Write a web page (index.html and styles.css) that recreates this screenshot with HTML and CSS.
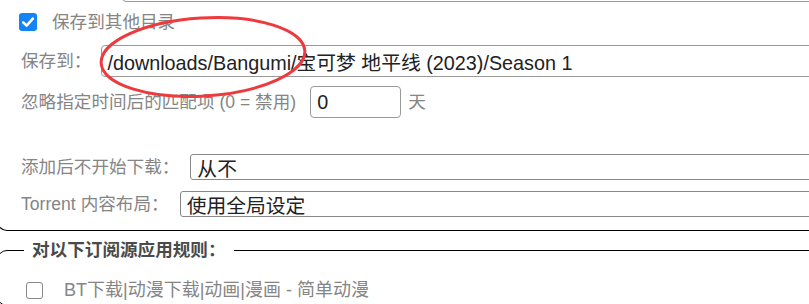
FILE: index.html
```html
<!DOCTYPE html>
<html lang="zh-CN">
<head>
<meta charset="utf-8">
<title>RSS 规则</title>
<link rel="stylesheet" href="styles.css">
</head>
<body>
<div class="page">
  <div class="group">
    <div class="prev-input"></div>
    <label class="row row-check">
      <span class="check checked"><svg viewBox="0 0 18 18" width="18" height="18"><path d="M4.2 9.4 L7.6 12.6 L13.8 5.6" fill="none" stroke="#fff" stroke-width="2.6" stroke-linecap="round" stroke-linejoin="round"/></svg></span>
      <span class="label">保存到其他目录</span>
    </label>
    <div class="row row-save">
      <span class="label">保存到：</span>
      <div class="field wide">/downloads/Bangumi/宝可梦 地平线 (2023)/Season 1</div>
    </div>
    <div class="row row-ignore">
      <span class="label">忽略指定时间后的匹配项 (0 = 禁用)</span>
      <div class="field num">0</div>
      <span class="label unit">天</span>
    </div>
    <div class="row row-paused">
      <span class="label">添加后不开始下载：</span>
      <div class="field select">从不</div>
    </div>
    <div class="row row-layout">
      <span class="label">Torrent 内容布局：</span>
      <div class="field select">使用全局设定</div>
    </div>
  </div>
  <fieldset class="feeds">
    <legend>对以下订阅源应用规则：</legend>
    <label class="row feed-item">
      <span class="check"></span>
      <span class="label feed-label">BT下载|动漫下载|动画|漫画 - 简单动漫</span>
    </label>
  </fieldset>
  <svg class="annotation" width="809" height="304" viewBox="0 0 809 304">
    <ellipse cx="203" cy="57" rx="102" ry="39" transform="rotate(-3.5 203 57)" fill="none" stroke="#ee3a3d" stroke-width="3"/>
  </svg>
</div>
</body>
</html>
```
FILE: styles.css
```css
html, body {
  margin: 0;
  padding: 0;
  background: #fff;
}
body {
  width: 809px;
  height: 304px;
  overflow: hidden;
  font-family: "Liberation Sans", "Noto Sans CJK SC", sans-serif;
}
.page {
  position: relative;
  width: 809px;
  height: 304px;
  overflow: hidden;
}
.group {
  border: 1px solid #000;
  border-top: 0;
  border-radius: 0 0 10px 10px;
  margin: 0 -20px 0 -3px;
  padding: 0 0 13px 23px;
}
.prev-input {
  height: 30px;
  margin: -28px 0 0 101px;
  border: 1px solid #999;
  border-radius: 4px;
  box-sizing: border-box;
}
.row {
  display: flex;
  align-items: center;
}
.label {
  font-size: 17.6px;
  line-height: 22px;
  color: #858585;
  white-space: nowrap;
}
.row-check {
  height: 40px;
}
.check {
  width: 18px;
  height: 18px;
  box-sizing: border-box;
  border-radius: 3px;
  flex: none;
  display: flex;
}
.check.checked {
  background: #1384f7;
  margin-left: -2px;
  margin-right: 15px;
}
.field {
  box-sizing: border-box;
  border: 1px solid #999;
  border-radius: 4px;
  color: #222;
  font-size: 19.8px;
  display: flex;
  align-items: center;
  white-space: nowrap;
}
.wide {
  flex: 1;
  height: 32px;
  margin-left: 10px;
  padding-left: 5px;
}
.row-save {
  margin-top: 3px;
}
.row-ignore {
  margin-top: 9px;
}
.num {
  width: 91px;
  height: 32px;
  margin-left: 14px;
  padding-left: 6px;
}
.unit {
  margin-left: 7px;
}
.select {
  flex: 1;
  height: 26px;
  margin-left: 11px;
  padding-left: 6px;
  border-color: #888;
  border-radius: 3px;
}
.row-paused {
  margin-top: 36px;
}
.row-layout {
  margin-top: 11px;
}
.feeds {
  margin: 7px -20px 0 -3px;
  padding: 0 0 0 26px;
  border: 1px solid #000;
  border-radius: 10px;
  min-inline-size: 0;
}
.feeds legend {
  padding: 0 8px;
  font-size: 17.6px;
  line-height: 24px;
  font-weight: bold;
  color: #4a4a4a;
}
.feed-item {
  height: 30px;
  margin-top: 13px;
}
.feed-label {
  font-size: 18px;
}
.feed-item .check {
  width: 17px;
  height: 17px;
  border: 1px solid #888;
  border-radius: 3px;
  margin-left: 2px;
  margin-right: 21px;
}
.annotation {
  position: absolute;
  left: 0;
  top: 0;
  pointer-events: none;
}
```
